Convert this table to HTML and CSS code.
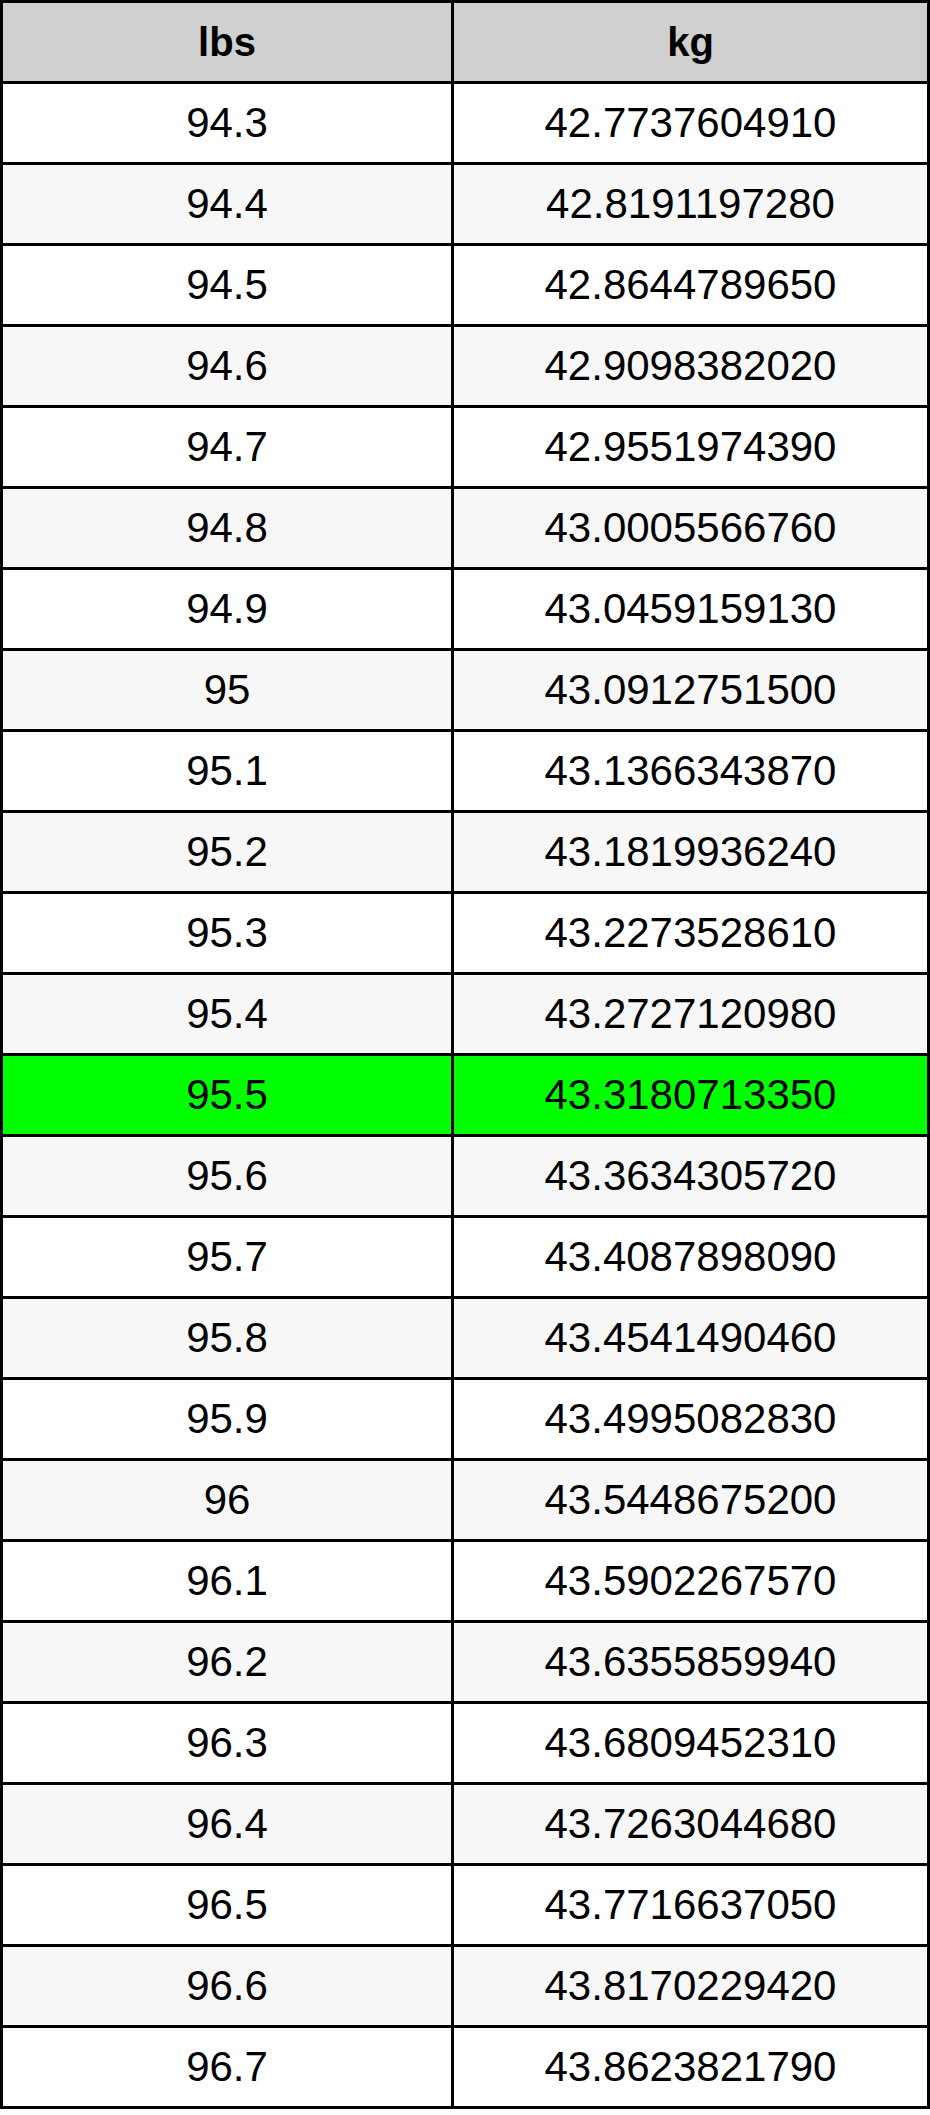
FILE: index.html
```html
<!DOCTYPE html>
<html>
<head>
<meta charset="utf-8">
<link rel="stylesheet" href="styles.css">
</head>
<body>
<table class="conv">
<colgroup><col class="c1"><col class="c2"></colgroup>
<thead>
<tr><th>lbs</th><th>kg</th></tr>
</thead>
<tbody>
<tr><td>94.3</td><td>42.7737604910</td></tr>
<tr><td>94.4</td><td>42.8191197280</td></tr>
<tr><td>94.5</td><td>42.8644789650</td></tr>
<tr><td>94.6</td><td>42.9098382020</td></tr>
<tr><td>94.7</td><td>42.9551974390</td></tr>
<tr><td>94.8</td><td>43.0005566760</td></tr>
<tr><td>94.9</td><td>43.0459159130</td></tr>
<tr><td>95</td><td>43.0912751500</td></tr>
<tr><td>95.1</td><td>43.1366343870</td></tr>
<tr><td>95.2</td><td>43.1819936240</td></tr>
<tr><td>95.3</td><td>43.2273528610</td></tr>
<tr><td>95.4</td><td>43.2727120980</td></tr>
<tr class="hl"><td>95.5</td><td>43.3180713350</td></tr>
<tr><td>95.6</td><td>43.3634305720</td></tr>
<tr><td>95.7</td><td>43.4087898090</td></tr>
<tr><td>95.8</td><td>43.4541490460</td></tr>
<tr><td>95.9</td><td>43.4995082830</td></tr>
<tr><td>96</td><td>43.5448675200</td></tr>
<tr><td>96.1</td><td>43.5902267570</td></tr>
<tr><td>96.2</td><td>43.6355859940</td></tr>
<tr><td>96.3</td><td>43.6809452310</td></tr>
<tr><td>96.4</td><td>43.7263044680</td></tr>
<tr><td>96.5</td><td>43.7716637050</td></tr>
<tr><td>96.6</td><td>43.8170229420</td></tr>
<tr><td>96.7</td><td>43.8623821790</td></tr>
</tbody>
</table>
</body>
</html>
```
FILE: styles.css
```css
html, body {
  margin: 0;
  padding: 0;
  background: #ffffff;
}
.conv {
  border-collapse: collapse;
  table-layout: fixed;
  width: 930px;
  font-family: "Liberation Sans", Arial, sans-serif;
  font-size: 42px;
  color: #000;
  border: 3px solid #000;
}
.conv .c1 { width: 451px; }
.conv .c2 { width: 476px; }
.conv th, .conv td {
  border: 3px solid #000;
  padding: 0;
  height: 78px;
  text-align: center;
  vertical-align: middle;
  line-height: 1;
}
.conv th {
  background: #d0d0d0;
  font-weight: bold;
  font-size: 40px;
}
.conv tbody tr:nth-child(odd) td { background: #ffffff; }
.conv tbody tr:nth-child(even) td { background: #f7f7f7; }
.conv tbody tr.hl td { background: #00ff00; }
```
